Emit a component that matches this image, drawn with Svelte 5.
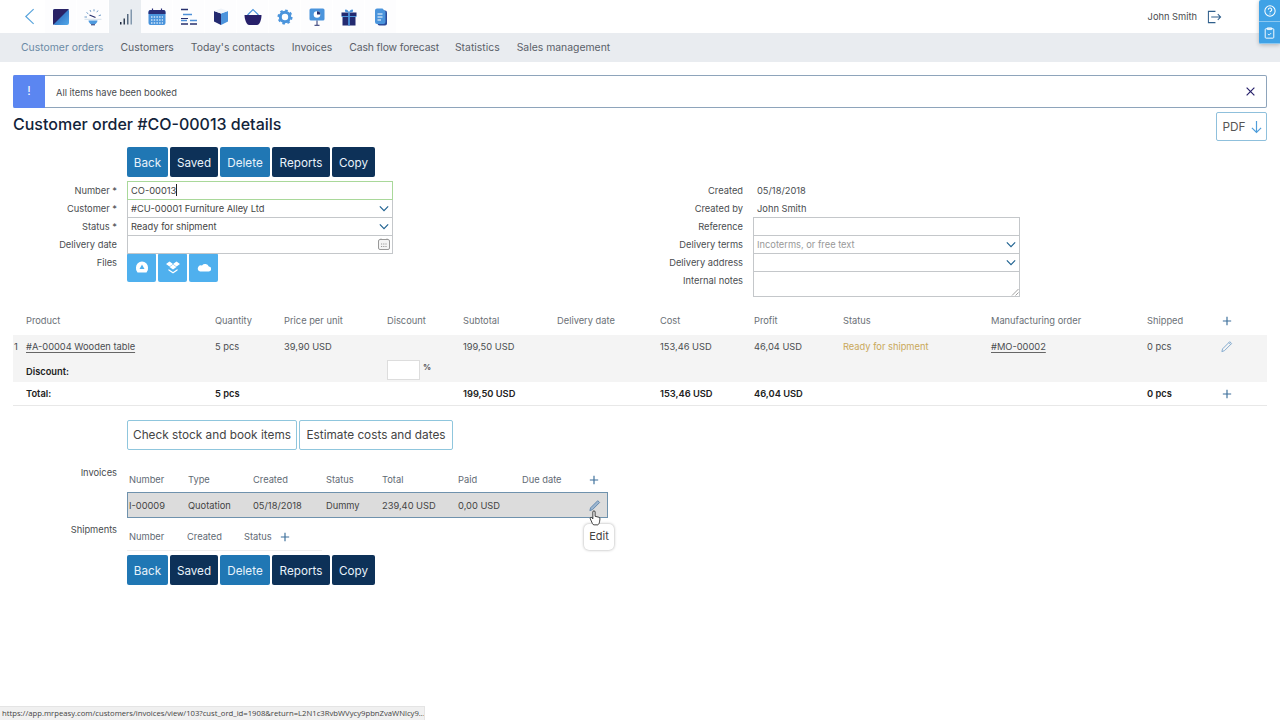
<script>
  const nav = ["Customer orders","Customers","Today's contacts","Invoices","Cash flow forecast","Statistics","Sales management"];
  const actions = [["Back","b"],["Saved","d"],["Delete","b"],["Reports","d"],["Copy","d"]];
  const cols = ["","Product","Quantity","Price per unit","Discount","Subtotal","Delivery date","Cost","Profit","Status","Manufacturing order","Shipped"];
  const invHead = ["Number","Type","Created","Status","Total","Paid","Due date"];
  const invRow = ["I-00009","Quotation","05/18/2018","Dummy","239,40 USD","0,00 USD",""];
</script>

{#snippet chev()}
  <svg class="chev" viewBox="0 0 12 8"><path d="M1 1.500l5 5 5-5" fill="none" stroke="#1f6291" stroke-width="1.400"/></svg>
{/snippet}
{#snippet plus()}
  <svg class="plus" viewBox="0 0 12 12"><path d="M6 1v10M1 6h10" fill="none" stroke="#3d6f9b" stroke-width="1.400"/></svg>
{/snippet}
{#snippet pencil()}
  <svg class="pencil" viewBox="0 0 14 14"><path d="M2 12.500l.8-3L10.500 1.800l2 2-7.700 7.700z M9.500 2.800l2 2" fill="none" stroke="#7da6cc" stroke-width="1"/></svg>
{/snippet}
{#snippet toolbar()}
  <div class="actions">
    {#each actions as [t,k]}<button class={k}>{t}</button>{/each}
  </div>
{/snippet}

<div class="page">
  <header class="top">
    <div class="back"><svg viewBox="0 0 12 18" width="11" height="17"><path d="M10.500 1L2 9l8.500 8" fill="none" stroke="#5aa5dc" stroke-width="1.300"/></svg></div>
    <div class="tile"><svg viewBox="0 0 18 18"><defs><linearGradient id="g" x1="0" y1="0" x2="1" y2="1"><stop offset="0.3" stop-color="#2f6fc0"/><stop offset="1" stop-color="#52a9ea"/></linearGradient></defs><rect x="1" y="1" width="16" height="16" rx="2" fill="url(#g)"/><path d="M1 17V3a2 2 0 0 1 2-2h14z" fill="#2a2366"/></svg></div>
    <div class="tile"><svg viewBox="0 0 18 18"><path d="M.5 9h2.500M2.500 4.500l1.800 1.300M6 2l.8 1.800M10 1.300v2M14 2.500l-1.200 1.700M17 7l-2.300.7" stroke="#6f9cc8" stroke-width="1" fill="none"/><path d="M5.500 7l6 2.500" stroke="#27306e" stroke-width="1.300"/><path d="M.5 11.300h17" stroke="#d4e0ec" stroke-width="1"/><path d="M4.500 12.500h9a4.500 4 0 0 1-9 0z" fill="#4e9ade"/><path d="M7 16.800h4" stroke="#27306e" stroke-width="1"/></svg></div>
    <div class="tile on"><svg viewBox="0 0 18 18"><rect x="3" y="14" width="1.500" height="2.500" fill="#1f2a40"/><rect x="6.500" y="10.500" width="1.500" height="6" fill="#2f3d50"/><rect x="10" y="6" width="1.500" height="10.500" fill="#566a80"/><rect x="13.500" y="1.500" width="1.500" height="15" fill="#8298ae"/></svg></div>
    <div class="tile"><svg viewBox="0 0 18 18"><rect x="0.500" y="2" width="17" height="15" rx="2" fill="#4a94dc"/><path d="M0.500 6V4a2 2 0 0 1 2-2h13a2 2 0 0 1 2 2v2z" fill="#2a2f78"/><path d="M4.500 .5v3M13.500 .5v3" stroke="#2a2f78" stroke-width="1.200"/><path d="M3 9h12M3 12h12M3 15h12" stroke="#cfe4f7" stroke-width="1.300" stroke-dasharray="1.500 1.200"/></svg></div>
    <div class="tile"><svg viewBox="0 0 18 18"><path d="M1 1.500h7" stroke="#27306e" stroke-width="1.500"/><path d="M3 6.500h9" stroke="#4e90d8" stroke-width="1.500"/><path d="M1 10.500h7" stroke="#27306e" stroke-width="1"/><path d="M1 12.500h6M10 12.500h7" stroke="#4e90d8" stroke-width="1.500"/><path d="M1 16h7M10 16h7" stroke="#27306e" stroke-width="1.500"/></svg></div>
    <div class="tile"><svg viewBox="0 0 18 18"><path d="M9 5.500L2 3v10.500L9 17z" fill="#232a70"/><path d="M9 5.500L16 3v10.500L9 17z" fill="#4b93dc"/><path d="M2 3l7-2.500L16 3 9 5.500z" fill="#eef3f9"/></svg></div>
    <div class="tile"><svg viewBox="0 0 18 18"><path d="M3.500 7L9 1.500 14.500 7" fill="none" stroke="#4a94dc" stroke-width="1.200"/><path d="M.5 7h17c0 5-2 10-4.500 10h-8C3 17 .5 12 .5 7z" fill="#27206a"/></svg></div>
    <div class="tile"><svg viewBox="0 0 18 18"><circle cx="9" cy="9" r="4.700" fill="none" stroke="#4a94dc" stroke-width="3"/><circle cx="9" cy="9" r="6.600" fill="none" stroke="#4a94dc" stroke-width="1.900" stroke-dasharray="2.600 2.580"/></svg></div>
    <div class="tile"><svg viewBox="0 0 18 18"><rect x="1.500" y="0.500" width="15" height="12" rx="1.500" fill="#4a94dc"/><circle cx="9" cy="6.500" r="3.300" fill="#fff"/><path d="M9 6.500V3.200a3.300 3.300 0 0 1 3.300 3.300z" fill="#27306e"/><path d="M9 12.500v4.500M6.500 17.300h5" stroke="#27306e" stroke-width="1"/></svg></div>
    <div class="tile"><svg viewBox="0 0 18 18"><rect x="1.500" y="4.500" width="15" height="3.500" fill="#232a70"/><rect x="2.500" y="9" width="13" height="8.500" fill="#232a70"/><path d="M9 4.500v13" stroke="#4a94dc" stroke-width="1.800"/><path d="M1.500 8.500h15" stroke="#4a94dc" stroke-width="1"/><path d="M9 4C7 .5 4.500 1 5 3s3 1.500 4 1c1 .5 3.500 1 4-1S11 .5 9 4z" fill="#4a94dc"/></svg></div>
    <div class="tile"><svg viewBox="0 0 18 18"><rect x="5.500" y="2.500" width="9.500" height="15" rx="2" fill="#2a4a9a"/><path d="M5 .5h5.500L13.500 3.500V14a2 2 0 0 1-2 2H5a2 2 0 0 1-2-2V2.500a2 2 0 0 1 2-2z" fill="#4a94dc"/><path d="M5.500 6h5M5.500 9h5M5.500 12h3.500" stroke="#fff" stroke-width="1.200"/></svg></div>
    <div class="user">
      <span>John Smith</span>
      <svg viewBox="0 0 16 14" width="15" height="14"><path d="M9 1H1.500v12H9" fill="none" stroke="#2f5f8c" stroke-width="1.100"/><path d="M4.500 7h10M11.500 4l3 3-3 3" fill="none" stroke="#2f5f8c" stroke-width="1.100"/></svg>
    </div>
  </header>

  <nav class="sub">
    {#each nav as n, i}<span class:cur={i===0}>{n}</span>{/each}
  </nav>

  <main class="main">
    <div class="alert">
      <div class="mark">!</div>
      <div class="msg">All items have been booked</div>
      <svg class="close" viewBox="0 0 10 10"><path d="M.7.700l8.600 8.600M9.300.700L.700 9.300" stroke="#27206a" stroke-width="1.300"/></svg>
    </div>

    <div class="titlebar">
      <h1>Customer order #CO-00013 details</h1>
      <button class="pdf"><span>PDF</span> <svg viewBox="0 0 12 14" width="11" height="14"><path d="M6 .5v12.500M1 8l5 5 5-5" fill="none" stroke="#4f9edb" stroke-width="1.300"/></svg></button>
    </div>

    <div class="indent">{@render toolbar()}</div>

    <section class="form">
      <div class="fgrid left">
        <div class="lab">Number *</div><div class="field active">CO-00013<i class="caret"></i></div>
        <div class="lab">Customer *</div><div class="field">#CU-00001 Furniture Alley Ltd{@render chev()}</div>
        <div class="lab">Status *</div><div class="field">Ready for shipment{@render chev()}</div>
        <div class="lab">Delivery date</div><div class="field">
          <svg class="cal" viewBox="0 0 12 12"><rect x=".500" y="1.500" width="11" height="10" rx="1.500" fill="#f4f4f4" stroke="#999"/><path d="M3 .500v2M9 .500v2M3 6h6M3 8.500h6" stroke="#999" stroke-dasharray="1.200 1"/></svg>
        </div>
        <div class="lab">Files</div>
        <div class="files">
          <span class="fbtn"><svg viewBox="0 0 14 13"><path d="M7 .500a6 6 0 0 1 6 6 6 6 0 0 1-1.500 5h-9A6 6 0 0 1 1 6.500a6 6 0 0 1 6-6z" fill="#fff"/><path d="M7 3.500L4.500 8h5z" fill="#4fb0ee"/></svg></span>
          <span class="fbtn"><svg viewBox="0 0 14 13"><path d="M3.500 .500L7 3 3.500 5.500 0 3zM10.500 .500L14 3l-3.500 2.500L7 3zM3.500 6L7 3.500 7 8.500zM7 8.500L10.500 6 7 3.500zM2.500 8L7 11l4.500-3v1.500L7 12.500 2.500 9.500z" fill="#fff"/></svg></span>
          <span class="fbtn"><svg viewBox="0 0 14 9"><path d="M3 8.500h8.500a2.500 2.500 0 0 0 .3-5A4 4 0 0 0 5 2.500 3 3 0 0 0 3 8.500z" fill="#fff"/></svg></span>
        </div>
      </div>
      <div class="fgrid right">
        <div class="lab">Created</div><div class="val">05/18/2018</div>
        <div class="lab">Created by</div><div class="val">John Smith</div>
        <div class="lab">Reference</div><div class="field"></div>
        <div class="lab">Delivery terms</div><div class="field ph">Incoterms, or free text{@render chev()}</div>
        <div class="lab">Delivery address</div><div class="field">{@render chev()}</div>
        <div class="lab">Internal notes</div><div class="field notes"><svg class="grip" viewBox="0 0 8 8"><path d="M7.500 1L1 7.500M7.500 4.500L4.500 7.500" stroke="#888" stroke-width=".8"/></svg></div>
      </div>
    </section>

    <section class="items">
      <div class="tr head">
        {#each cols as c}<div>{c}</div>{/each}
        <div class="act">{@render plus()}</div>
      </div>
      <div class="tr line">
        <div class="idx">1</div><div><u>#A-00004 Wooden table</u></div><div>5 pcs</div><div>39,90 USD</div><div></div><div>199,50 USD</div><div></div><div>153,46 USD</div><div>46,04 USD</div><div class="amber">Ready for shipment</div><div><u>#MO-00002</u></div><div>0 pcs</div><div class="act shift">{@render pencil()}</div>
      </div>
      <div class="tr disc">
        <div></div><div class="bold low">Discount:</div><div></div><div></div><div class="pct"><i class="box"></i><b>%</b></div>
      </div>
      <div class="tr total bold">
        <div></div><div>Total:</div><div>5 pcs</div><div></div><div></div><div>199,50 USD</div><div></div><div>153,46 USD</div><div>46,04 USD</div><div></div><div></div><div>0 pcs</div><div class="act">{@render plus()}</div>
      </div>
    </section>

    <div class="indent ops">
      <button class="ol">Check stock and book items</button>
      <button class="ol">Estimate costs and dates</button>
    </div>

    <section class="sect inv">
      <div class="lab side">Invoices</div>
      <div class="invt">
        <div class="ir ih">
          {#each invHead as h}<div>{h}</div>{/each}
          <div class="ia">{@render plus()}</div>
        </div>
        <div class="ir ib">
          {#each invRow as v}<div class="cell">{v}</div>{/each}
          <div class="ia">
            <svg class="pencil dark" viewBox="0 0 14 14"><path d="M2 12.500l.8-3L10.500 1.800l2 2-7.700 7.700z" fill="#9cb6d0" stroke="#5f86ad" stroke-width="1"/></svg>
            <div class="tip">Edit</div>
            <svg class="hand" viewBox="0 0 14 18"><path d="M4.500 2a1.300 1.300 0 0 1 2.600 0v5l4 1a2 2 0 0 1 1.700 2l-.5 3.500c-.2 1.500-1 3-2 3.500H6c-1 0-1.500-.5-2-1.500L1.500 10c-.8-1.500 1-2.500 2-1.200l1 1.200z" fill="#fff" stroke="#222" stroke-width="1"/></svg>
          </div>
        </div>
      </div>
    </section>

    <section class="sect ship">
      <div class="lab side">Shipments</div>
      <div class="sh">
        <span class="s1">Number</span><span class="s2">Created</span><span class="s3">Status</span>{@render plus()}
      </div>
    </section>

    <div class="indent">{@render toolbar()}</div>
  </main>

  <div class="tabs">
    <div class="t"><svg viewBox="0 0 14 14" width="12" height="12"><circle cx="7" cy="7" r="6" fill="none" stroke="#fff" stroke-width="1.200"/><path d="M5 5.500a2 2 0 1 1 2.800 1.800c-.6.3-.8.6-.8 1.200M7 10v1" fill="none" stroke="#fff" stroke-width="1.200"/></svg></div>
    <div class="t"><svg viewBox="0 0 12 14" width="11" height="12"><rect x="1" y="2" width="10" height="11" rx="1" fill="none" stroke="#fff" stroke-width="1.100"/><path d="M3.500 1h5v2h-5zM4 8l1.500 1.500L8 7" fill="none" stroke="#fff"/></svg></div>
  </div>
  <div class="status">https://app.mrpeasy.com/customers/invoices/view/103?cust_ord_id=1908&amp;return=L2N1c3RvbWVycy9pbnZvaWNlcy9...</div>
</div>

<style>
  :global(body) { margin: 0; background: #fff; }
  .page { position: relative; width: 1280px; height: 720px; overflow: hidden; font: 9.300px/1.2 Inter, "Liberation Sans", sans-serif; color: #4a4d50; }
  button { font: inherit; cursor: pointer; }
  svg { display: block; }

  .top { display: flex; align-items: stretch; height: 33px; padding-left: 13px; }
  .back { width: 32px; display: flex; align-items: center; justify-content: center; }
  .tile { width: 31px; margin-right: 1px; display: flex; align-items: center; justify-content: center; background: #fdfdfe; }
  .tile svg { width: 18px; height: 18px; margin-left: 1px; }
  .tile.on { background: #e9edf1; width: 32px; margin-right: 0; }
  .user { margin-left: auto; margin-right: 58px; display: flex; align-items: center; gap: 10px; }

  .sub { height: 28px; padding-top: 1px; background: #e9ecf0; display: flex; align-items: center; gap: 17px; padding-left: 21px; font-size: 10.400px; color: #5a6068; }
  .sub .cur { color: #6b8aa5; }
  .sub span:nth-child(5) { letter-spacing: -.14px; }
  .sub span:nth-child(6) { margin-left: -1px; }

  .main { padding: 13px 13px 0; }
  .alert { height: 31px; display: flex; align-items: center; border: 1px solid #8ea4bb; border-left: 0; border-radius: 2px; }
  .mark { width: 32px; height: 33px; margin: -1px 0; background: #5b86f1; color: #fff; display: flex; align-items: center; justify-content: center; font-size: 12px; border-radius: 2px 0 0 2px; }
  .msg { margin-left: 11px; flex: 1; padding-top: 2px; }
  .close { width: 9px; height: 9px; margin-right: 11px; }

  .titlebar { display: flex; justify-content: space-between; align-items: flex-start; height: 39px; padding-top: 4px; box-sizing: border-box; }
  h1 { margin: 3px 0 0 0; font-size: 16px; font-weight: 500; color: #12233a; line-height: 18px; }
  .pdf { width: 51px; height: 29px; margin: 0; padding: 1px 0 0 1px; display: flex; align-items: center; justify-content: center; gap: 5px; background: #fff; border: 1px solid #8fc0dc; border-radius: 2px; color: #555; font-size: 11.800px; }

  .indent { padding-left: 114px; }
  .actions { display: flex; gap: 2px; height: 30px; }
  .actions button { border: 0; border-radius: 2px; color: #e8f3fb; padding: 2px 0 0; font-size: 11.700px; width: 41px; }
  .actions button:nth-child(2) { width: 48px; }
  .actions button:nth-child(3) { width: 50px; }
  .actions button:nth-child(4) { width: 58px; }
  .actions button:nth-child(5) { width: 43px; }
  .actions .b { background: #2077b4; }
  .actions .d { background: #0d3158; }

  .form { position: relative; display: flex; margin-top: 4px; height: 118px; }
  .fgrid { display: grid; grid-auto-rows: 18px; column-gap: 10px; align-content: start; }
  .left { grid-template-columns: 104px 266px; width: 626px; }
  .right { grid-template-columns: 104px 267px; }
  .lab { text-align: right; line-height: 19px; }
  .val { line-height: 19px; padding-left: 4px; }
  .field { position: relative; box-sizing: border-box; border: 1px solid #c4c7ca; margin-bottom: -1px; height: 19px; line-height: 17px; padding-left: 3px; background: #fff; color: #444; }
  .field.active { border-color: #a9d89a; z-index: 1; }
  .field.ph { color: #999; }
  .field.notes { height: 26px; }
  .caret { display: inline-block; width: 1px; height: 12px; background: #222; vertical-align: -2px; }
  .chev { position: absolute; right: 3px; top: 5px; width: 10px; height: 7px; }
  .cal { position: absolute; right: 2px; top: 2px; width: 12px; height: 12px; }
  .grip { position: absolute; right: 0; bottom: 0; width: 8px; height: 8px; }
  .files { display: flex; gap: 2px; }
  .fbtn { width: 29px; height: 29px; background: #4fb0ee; border-radius: 2px; display: flex; align-items: center; justify-content: center; }
  .fbtn svg { width: 14px; height: 13px; }

  .tr { display: grid; grid-template-columns: 13px 189px 69px 103px 76px 94px 103px 94px 89px 148px 156px 73px 47px; align-items: center; }
  .items { margin-top: 9px; }
  .head { height: 24px; padding: 1px 0 2px; color: #6a7076; }
  .line { height: 23px; background: #f4f4f4; }
  .disc { height: 24px; background: #f4f4f4; }
  .total { height: 23px; border-bottom: 1px solid #e8e8e8; }
  .bold { font-weight: 600; color: #222; }
  .low { padding-top: 3px; }
  .idx { padding-left: 1px; }
  .amber { color: #c9a85a; }
  u { text-decoration-color: #666; text-underline-offset: 1.500px; }
  .act { padding-left: 2px; }
  .act.shift { padding-left: 0; }
  .plus { width: 10px; height: 10px; }
  .pencil { width: 13px; height: 13px; }
  .pct { display: flex; gap: 3px; align-items: flex-start; }
  .pct b { font-size: 8px; margin-top: 3px; }
  .box { width: 33px; height: 20px; background: #fff; border: 1px solid #ddd; box-sizing: border-box; }

  .ops { display: flex; gap: 2px; margin-top: 14px; height: 30px; }
  .ol { background: #fff; border: 1px solid #8fc6dd; border-radius: 2px; color: #444; padding: 1px 0 0; width: 170px; font-size: 11.800px; }
  .ol + .ol { width: 154px; }

  .sect { display: flex; gap: 10px; }
  .side { width: 104px; flex: none; }
  .inv { margin-top: 13px; }
  .ir { display: grid; grid-template-columns: 59px 65px 73px 56px 76px 64px 62px 25px; align-items: center; padding-left: 2px; box-sizing: border-box; width: 481px; }
  .invt { padding-top: 4px; }
  .ih { height: 25px; color: #5f6a74; }
  .ib { position: relative; height: 26px; background: #dcdcdc; border: 1px solid #6f92ad; padding-left: 1px; color: #444; }
  .cell { padding-top: 1px; }
  .ia { position: relative; }
  .ih .ia { padding-left: 5px; }
  .ib .ia { padding-left: 4px; }
  .hand { position: absolute; z-index: 2; left: 5px; top: 11px; width: 12px; height: 16px; }
  .tip { position: absolute; left: 0; top: 25px; width: 30px; height: 26px; box-sizing: border-box; background: #fff; border-radius: 5px; box-shadow: 0 0 3px rgba(0,0,0,.35); font-size: 11px; display: flex; align-items: center; justify-content: center; color: #444; }

  .ship { margin-top: 2px; height: 35px; }
  .sh { position: relative; display: flex; align-items: center; height: 27px; padding-top: 1px; margin-top: 2px; width: 193px; padding-left: 2px; box-sizing: content-box; color: #5f6a74; border-bottom: 1px solid #eee; }
  .s1 { width: 58px; } .s2 { width: 57px; } .s3 { width: 36px; }

  .tabs { position: absolute; right: 0; top: 0; width: 21px; border-radius: 2px 0 0 2px; overflow: hidden; box-shadow: 0 1px 4px rgba(0,0,0,.25); }
  .t { height: 21px; background: #3fa2e6; display: flex; align-items: center; justify-content: center; border-bottom: 1px solid #8cc8f0; }
  .status { position: absolute; left: 0; bottom: 0; width: 425px; height: 14px; box-sizing: border-box; background: #f0f0f0; border: 1px solid #e4e4e4; border-width: 1px 1px 0 0; padding: 0 2px; font: 7.700px/13px "Open Sans", sans-serif; color: #444; white-space: nowrap; overflow: hidden; }
</style>
